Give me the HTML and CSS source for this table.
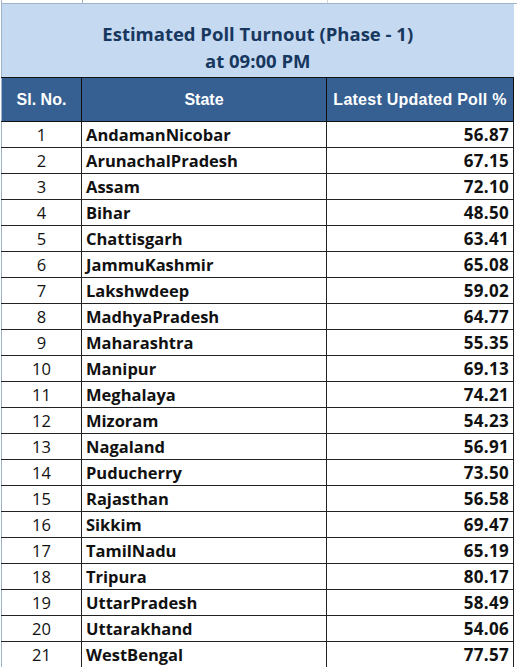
FILE: index.html
```html
<!DOCTYPE html>
<html>
<head>
<meta charset="utf-8">
<link rel="stylesheet" href="styles.css">
</head>
<body>
<div class="sheet">
  <div class="strip"><span class="s1"></span><span class="s2"></span><span class="s3"></span></div>
  <table class="grid">
    <colgroup><col class="c1"><col class="c2"><col class="c3"></colgroup>
    <tr class="title-row"><td colspan="3"><div class="t1">Estimated Poll Turnout (Phase - 1)</div><div class="t2">at 09:00 PM</div></td></tr>
    <tr class="head"><th>Sl. No.</th><th>State</th><th class="wide">Latest Updated Poll %</th></tr>
    <tr><td class="no">1</td><td class="st">AndamanNicobar</td><td class="pv">56.87</td></tr>
    <tr><td class="no">2</td><td class="st">ArunachalPradesh</td><td class="pv">67.15</td></tr>
    <tr><td class="no">3</td><td class="st">Assam</td><td class="pv">72.10</td></tr>
    <tr><td class="no">4</td><td class="st">Bihar</td><td class="pv">48.50</td></tr>
    <tr><td class="no">5</td><td class="st">Chattisgarh</td><td class="pv">63.41</td></tr>
    <tr><td class="no">6</td><td class="st">JammuKashmir</td><td class="pv">65.08</td></tr>
    <tr><td class="no">7</td><td class="st">Lakshwdeep</td><td class="pv">59.02</td></tr>
    <tr><td class="no">8</td><td class="st">MadhyaPradesh</td><td class="pv">64.77</td></tr>
    <tr><td class="no">9</td><td class="st">Maharashtra</td><td class="pv">55.35</td></tr>
    <tr><td class="no">10</td><td class="st">Manipur</td><td class="pv">69.13</td></tr>
    <tr><td class="no">11</td><td class="st">Meghalaya</td><td class="pv">74.21</td></tr>
    <tr><td class="no">12</td><td class="st">Mizoram</td><td class="pv">54.23</td></tr>
    <tr><td class="no">13</td><td class="st">Nagaland</td><td class="pv">56.91</td></tr>
    <tr><td class="no">14</td><td class="st">Puducherry</td><td class="pv">73.50</td></tr>
    <tr><td class="no">15</td><td class="st">Rajasthan</td><td class="pv">56.58</td></tr>
    <tr><td class="no">16</td><td class="st">Sikkim</td><td class="pv">69.47</td></tr>
    <tr><td class="no">17</td><td class="st">TamilNadu</td><td class="pv">65.19</td></tr>
    <tr><td class="no">18</td><td class="st">Tripura</td><td class="pv">80.17</td></tr>
    <tr><td class="no">19</td><td class="st">UttarPradesh</td><td class="pv">58.49</td></tr>
    <tr><td class="no">20</td><td class="st">Uttarakhand</td><td class="pv">54.06</td></tr>
    <tr><td class="no">21</td><td class="st">WestBengal</td><td class="pv">77.57</td></tr>
  </table>
</div>
</body>
</html>
```
FILE: styles.css
```css
html, body { margin: 0; padding: 0; background: #ffffff; }
.sheet { width: 517px; overflow: hidden; }
.strip { display: flex; height: 3px; border-bottom: 1px solid #9fb3cb; margin-left: 1px; border-left: 1px solid #9fb3cb; }
.strip span { display: block; height: 3px; }
.s1 { width: 80px; border-right: 1px solid #9fb3cb; }
.s2 { width: 244px; border-right: 1px solid #d0d7e0; }
.s3 { flex: 1; }
.grid {
  border-collapse: collapse;
  table-layout: fixed;
  width: 513px;
  margin-left: 1px;
  border-left: 1px solid #9fb3cb;
  font-family: "Open Sans", Lato, sans-serif;
}
.c1 { width: 80px; }
.c2 { width: 245px; }
.c3 { width: 187px; }
.title-row td {
  background: #c5d9f1;
  height: 73px;
  padding: 0;
  text-align: center;
  color: #17375e;
  font-weight: bold;
  font-size: 18.5px;
  line-height: 27px;
  vertical-align: top;
}
.t1 { padding-top: 16px; }
.head th {
  background: #366092;
  color: #ffffff;
  font-family: "Liberation Sans", Arial, sans-serif;
  font-weight: bold;
  font-size: 16px;
  height: 43px;
  padding: 0;
  border: 1px solid #111;
  border-left: 0;
}
.head th.wide { letter-spacing: 0.25px; }
.grid td.no, .grid td.st, .grid td.pv {
  height: 25px;
  padding: 0 5px;
  border-bottom: 1px solid #222;
  border-right: 1px solid #222;
  font-size: 16.5px;
  color: #111;
  line-height: 25px;
}
.grid td.no { text-align: center; font-weight: normal; }
.grid td.st { font-weight: bold; padding-left: 4px; }
.grid td.pv { font-weight: bold; text-align: right; font-size: 17px; padding-right: 4px; letter-spacing: 0.3px; }
```
